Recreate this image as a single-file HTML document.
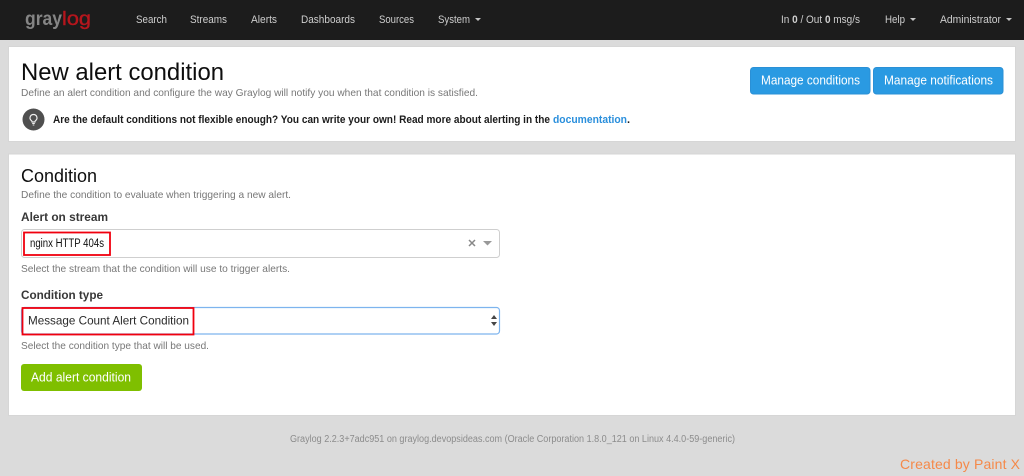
<!DOCTYPE html>
<html>
<head>
<meta charset="utf-8">
<title>New alert condition</title>
<style>
html,body{margin:0;padding:0;background:#dcdcdc;width:1024px;height:476px;overflow:hidden}
svg{display:block;position:absolute;left:0;top:0}
text{font-family:"Liberation Sans",sans-serif}
.nav{font-size:11px;fill:#cfcfcf}
.sub{font-size:10.5px;fill:#777}
.lab{font-size:12px;font-weight:bold;fill:#383838}
</style>
</head>
<body>
<svg width="1024" height="476" viewBox="0 0 1024 476" xmlns="http://www.w3.org/2000/svg">
<defs><filter id="b" x="-5%" y="-5%" width="110%" height="110%"><feGaussianBlur stdDeviation="0.35"/></filter></defs>
<g filter="url(#b)">
<rect x="0" y="0" width="1024" height="476" fill="#dbdbdb"/>
<rect x="0" y="0" width="1024" height="40" fill="#1a1a1a"/>

<text x="25" y="25" font-size="19" font-weight="bold" fill="#858585" textLength="37" lengthAdjust="spacingAndGlyphs">gray</text>
<text x="62" y="25" font-size="19" fill="#b5151f" stroke="#b5151f" stroke-width="0.4" textLength="29" lengthAdjust="spacingAndGlyphs">log</text>

<text class="nav" x="136" y="23" textLength="31" lengthAdjust="spacingAndGlyphs">Search</text>
<text class="nav" x="190" y="23" textLength="37" lengthAdjust="spacingAndGlyphs">Streams</text>
<text class="nav" x="251" y="23" textLength="26" lengthAdjust="spacingAndGlyphs">Alerts</text>
<text class="nav" x="301" y="23" textLength="54" lengthAdjust="spacingAndGlyphs">Dashboards</text>
<text class="nav" x="379" y="23" textLength="35" lengthAdjust="spacingAndGlyphs">Sources</text>
<text class="nav" x="438" y="23" textLength="32" lengthAdjust="spacingAndGlyphs">System</text>
<path d="M475 18h6l-3 3z" fill="#c4c4c4"/>
<text class="nav" x="781" y="23" textLength="79" lengthAdjust="spacingAndGlyphs">In <tspan font-weight="bold">0</tspan> / Out <tspan font-weight="bold">0</tspan> msg/s</text>
<text class="nav" x="885" y="23" textLength="20" lengthAdjust="spacingAndGlyphs">Help</text>
<path d="M910 18h6l-3 3z" fill="#c4c4c4"/>
<text class="nav" x="940" y="23" textLength="61" lengthAdjust="spacingAndGlyphs">Administrator</text>
<path d="M1006 18h6l-3 3z" fill="#c4c4c4"/>

<rect x="8.500" y="46.500" width="1007" height="95" fill="#fff" stroke="#d6d6d6"/>
<text x="21" y="80" font-size="24" fill="#111" textLength="203" lengthAdjust="spacingAndGlyphs">New alert condition</text>
<text class="sub" x="21" y="96" textLength="457" lengthAdjust="spacingAndGlyphs">Define an alert condition and configure the way Graylog will notify you when that condition is satisfied.</text>
<circle cx="33.500" cy="119.500" r="11" fill="#4f4f4f"/>
<path d="M33.500 114.500a3.400 3.400 0 0 1 2 6.200c-.5.4-.6.8-.6 1.300h-2.800c0-.5-.1-.9-.6-1.300a3.400 3.400 0 0 1 2-6.200z" fill="none" stroke="#eee" stroke-width="1.200"/>
<path d="M32.200 123.500h2.600M32.700 125h1.600" stroke="#eee" stroke-width="1"/>
<text x="53" y="123" font-size="11" font-weight="bold" fill="#1c1c1c" textLength="497" lengthAdjust="spacingAndGlyphs">Are the default conditions not flexible enough? You can write your own! Read more about alerting in the</text>
<text x="553" y="123" font-size="11" font-weight="bold" fill="#2a8fdc" textLength="74" lengthAdjust="spacingAndGlyphs">documentation</text>
<text x="627" y="123" font-size="11" font-weight="bold" fill="#1c1c1c">.</text>

<rect x="750.500" y="67.500" width="119.500" height="26.500" rx="3" fill="#2a9ae2" stroke="#2b90d6"/>
<text x="761" y="84.500" font-size="12.500" fill="#fff" textLength="99" lengthAdjust="spacingAndGlyphs">Manage conditions</text>
<rect x="873.500" y="67.500" width="129.500" height="26.500" rx="3" fill="#2a9ae2" stroke="#2b90d6"/>
<text x="884" y="84.500" font-size="12.500" fill="#fff" textLength="109" lengthAdjust="spacingAndGlyphs">Manage notifications</text>

<rect x="8.500" y="154" width="1007" height="261.500" fill="#fff" stroke="#d6d6d6"/>
<text x="21" y="182" font-size="18" fill="#111" textLength="76" lengthAdjust="spacingAndGlyphs">Condition</text>
<text class="sub" x="21" y="198" textLength="270" lengthAdjust="spacingAndGlyphs">Define the condition to evaluate when triggering a new alert.</text>
<text class="lab" x="21" y="221" textLength="87" lengthAdjust="spacingAndGlyphs">Alert on stream</text>

<rect x="21.500" y="229.500" width="478" height="28" rx="3" fill="#fff" stroke="#cfcfcf"/>
<rect x="24" y="232.500" width="86" height="22.500" fill="none" stroke="#f00010" stroke-width="1.800"/>
<text x="30" y="247" font-size="11.500" fill="#111" textLength="74" lengthAdjust="spacingAndGlyphs">nginx HTTP 404s</text>
<path d="M469 240l6 6M475 240l-6 6" stroke="#888" stroke-width="1.500" fill="none"/>
<path d="M483 241h9l-4.500 4.500z" fill="#999"/>
<text class="sub" x="21" y="272" textLength="269" lengthAdjust="spacingAndGlyphs">Select the stream that the condition will use to trigger alerts.</text>
<text class="lab" x="21" y="299" textLength="82" lengthAdjust="spacingAndGlyphs">Condition type</text>

<rect x="21.500" y="307.500" width="478" height="26.500" rx="3" fill="#fff" stroke="#7db4ee" stroke-width="1.200"/>
<rect x="22.500" y="308" width="171" height="26.500" fill="none" stroke="#f00010" stroke-width="1.800"/>
<text x="28" y="324.500" font-size="12" fill="#2a2a2a" textLength="161" lengthAdjust="spacingAndGlyphs">Message Count Alert Condition</text>
<path d="M491 319l3-4 3 4zM491 322l3 4 3-4z" fill="#444"/>
<text class="sub" x="21" y="349" textLength="188" lengthAdjust="spacingAndGlyphs">Select the condition type that will be used.</text>

<rect x="21" y="364" width="121" height="27" rx="3" fill="#7fbf00"/>
<text x="31" y="381.500" font-size="12.500" fill="#fff" textLength="100" lengthAdjust="spacingAndGlyphs">Add alert condition</text>

<text x="290" y="442" font-size="10" fill="#8c8c8c" textLength="445" lengthAdjust="spacingAndGlyphs">Graylog 2.2.3+7adc951 on graylog.devopsideas.com (Oracle Corporation 1.8.0_121 on Linux 4.4.0-59-generic)</text>
<text x="900" y="469" font-size="14" fill="#f5894a" textLength="120" lengthAdjust="spacing">Created by Paint X</text>
</g>
</svg>
</body>
</html>
